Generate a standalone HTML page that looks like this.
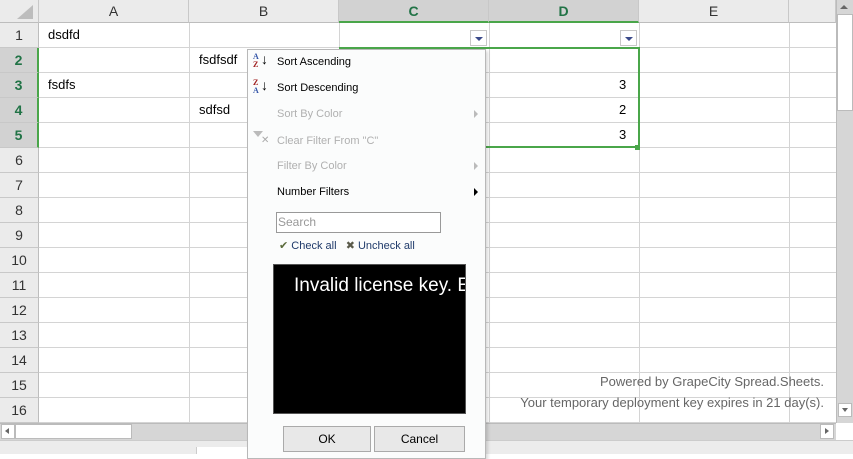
<!DOCTYPE html>
<html><head><meta charset="utf-8"><style>
*{box-sizing:border-box;margin:0;padding:0}
body{width:853px;height:454px;overflow:hidden;background:#fff;font-family:"Liberation Sans",sans-serif;position:relative}
.a{position:absolute}
.ch{top:0;height:23px;background:#ebebeb;border-right:1px solid #c8c8c8;border-bottom:1px solid #bdbdbd;text-align:center;line-height:23px;font-size:14px;color:#333}
.rh{left:0;width:39px;height:25px;background:#ebebeb;border-bottom:1px solid #c8c8c8;border-right:1px solid #bdbdbd;text-align:center;line-height:25px;font-size:14px;color:#333}
.sel{background:#d2d2d2;color:#217346;font-weight:bold}
.hl{height:1px;background:#d4d4d4;left:39px;width:797px}
.vl{width:1px;background:#d4d4d4;top:23px;height:400px}
.t{font-size:13px;color:#000}
.mi{left:277px;font-size:11px;color:#000}
.dis{color:#b0b0b0}
.fb{width:17px;height:16px;border:1px solid #c8c8c8;background:#fff}
.fb:after{content:"";position:absolute;left:4px;top:6px;border-left:4px solid transparent;border-right:4px solid transparent;border-top:4px solid #3b4a8a}
.arr{width:0;height:0;border-top:4px solid transparent;border-bottom:4px solid transparent;border-left:4px solid #bbb}
</style></head><body>
<div class="a ch" style="left:0;width:39px;background:#ebebeb"></div>
<div class="a" style="left:17px;top:5px;width:0;height:0;border-left:16px solid transparent;border-bottom:14px solid #bdbdbd"></div>
<div class="a ch" style="left:39px;width:150px">A</div>
<div class="a ch" style="left:189px;width:150px">B</div>
<div class="a ch sel" style="left:339px;width:150px;border-bottom:2px solid #4aa64a">C</div>
<div class="a ch sel" style="left:489px;width:150px;border-bottom:2px solid #4aa64a">D</div>
<div class="a ch" style="left:639px;width:150px">E</div>
<div class="a ch" style="left:789px;width:47px"></div>
<div class="a rh" style="top:23px">1</div>
<div class="a rh sel" style="top:48px;border-right:2px solid #4aa64a">2</div>
<div class="a rh sel" style="top:73px;border-right:2px solid #4aa64a">3</div>
<div class="a rh sel" style="top:98px;border-right:2px solid #4aa64a">4</div>
<div class="a rh sel" style="top:123px;border-right:2px solid #4aa64a">5</div>
<div class="a rh" style="top:148px">6</div>
<div class="a rh" style="top:173px">7</div>
<div class="a rh" style="top:198px">8</div>
<div class="a rh" style="top:223px">9</div>
<div class="a rh" style="top:248px">10</div>
<div class="a rh" style="top:273px">11</div>
<div class="a rh" style="top:298px">12</div>
<div class="a rh" style="top:323px">13</div>
<div class="a rh" style="top:348px">14</div>
<div class="a rh" style="top:373px">15</div>
<div class="a rh" style="top:398px">16</div>
<div class="a hl" style="top:47px"></div><div class="a hl" style="top:72px"></div><div class="a hl" style="top:97px"></div><div class="a hl" style="top:122px"></div><div class="a hl" style="top:147px"></div><div class="a hl" style="top:172px"></div><div class="a hl" style="top:197px"></div><div class="a hl" style="top:222px"></div><div class="a hl" style="top:247px"></div><div class="a hl" style="top:272px"></div><div class="a hl" style="top:297px"></div><div class="a hl" style="top:322px"></div><div class="a hl" style="top:347px"></div><div class="a hl" style="top:372px"></div><div class="a hl" style="top:397px"></div><div class="a hl" style="top:422px"></div>
<div class="a vl" style="left:189px"></div><div class="a vl" style="left:339px"></div><div class="a vl" style="left:489px"></div><div class="a vl" style="left:639px"></div><div class="a vl" style="left:789px"></div>
<div class="a" style="left:339px;top:47px;width:301px;height:101px;border:2px solid #4aa64a"></div>
<div class="a" style="left:635px;top:145px;width:5px;height:5px;background:#4aa64a"></div>
<div class="a t" style="left:48px;top:27px">dsdfd</div>
<div class="a t" style="left:199px;top:52px">fsdfsdf</div>
<div class="a t" style="left:48px;top:77px">fsdfs</div>
<div class="a t" style="left:199px;top:102px">sdfsd</div>
<div class="a t" style="left:619px;top:77px">3</div>
<div class="a t" style="left:619px;top:102px">2</div>
<div class="a t" style="left:619px;top:127px">3</div>
<div class="a fb" style="left:470px;top:30px"></div>
<div class="a fb" style="left:620px;top:30px"></div>
<div class="a" style="right:29px;top:374px;font-size:13px;color:#666">Powered by GrapeCity Spread.Sheets.</div>
<div class="a" style="right:29px;top:395px;font-size:13px;color:#666">Your temporary deployment key expires in 21 day(s).</div>
<div class="a" style="left:836px;top:0;width:17px;height:423px;background:#d6d6d6;border-left:1px solid #bbb"></div>
<div class="a" style="left:837px;top:14px;width:16px;height:97px;background:#fff;border:1px solid #bbb"></div>
<div class="a" style="left:840px;top:5px;border-left:4px solid transparent;border-right:4px solid transparent;border-bottom:4px solid #666"></div>
<div class="a" style="left:838px;top:403px;width:14px;height:14px;background:#fff;border:1px solid #bbb"></div>
<div class="a" style="left:842px;top:408px;border-left:3px solid transparent;border-right:3px solid transparent;border-top:4px solid #666"></div>
<div class="a" style="left:0;top:423px;width:836px;height:17px;background:#d6d6d6;border-top:1px solid #bbb"></div>
<div class="a" style="left:1px;top:424px;width:14px;height:15px;background:#fff;border:1px solid #bbb"></div>
<div class="a" style="left:5px;top:428px;border-top:3px solid transparent;border-bottom:3px solid transparent;border-right:4px solid #666"></div>
<div class="a" style="left:15px;top:424px;width:117px;height:15px;background:#fff;border:1px solid #bbb"></div>
<div class="a" style="left:820px;top:424px;width:14px;height:15px;background:#fff;border:1px solid #bbb"></div>
<div class="a" style="left:825px;top:428px;border-top:3px solid transparent;border-bottom:3px solid transparent;border-left:4px solid #666"></div>
<div class="a" style="left:0;top:440px;width:853px;height:14px;background:#ececec;border-top:1px solid #ccc"></div>
<div class="a" style="left:196px;top:447px;width:60px;height:7px;background:#fff;border-left:1px solid #ccc"></div>
<div class="a" style="left:247px;top:49px;width:239px;height:410px;background:#fbfcfc;border:1px solid #b8b8b8;box-shadow:2px 2px 3px rgba(0,0,0,.15)"></div>
<div class="a" style="left:253px;top:53px;font-family:'Liberation Serif',serif;font-size:8px;line-height:8px;font-weight:bold"><span style="color:#3556a8">A</span><br><span style="color:#a02020">Z</span></div>
<div class="a" style="left:261px;top:51px;font-size:14px">↓</div>
<div class="a" style="left:253px;top:79px;font-family:'Liberation Serif',serif;font-size:8px;line-height:8px;font-weight:bold"><span style="color:#a02020">Z</span><br><span style="color:#3556a8">A</span></div>
<div class="a" style="left:261px;top:77px;font-size:14px">↓</div>
<div class="a" style="left:253px;top:131px;width:9px;height:0;border-left:5px solid transparent;border-right:5px solid transparent;border-top:6px solid #bbb"></div>
<div class="a" style="left:261px;top:135px;font-size:10px;color:#aaa">✕</div>
<div class="a mi" style="top:56px">Sort Ascending</div>
<div class="a mi" style="top:82px">Sort Descending</div>
<div class="a mi dis" style="top:108px">Sort By Color</div>
<div class="a mi dis" style="top:135px">Clear Filter From "C"</div>
<div class="a mi dis" style="top:160px">Filter By Color</div>
<div class="a mi" style="top:186px">Number Filters</div>
<div class="a arr" style="left:474px;top:110px"></div>
<div class="a arr" style="left:474px;top:162px"></div>
<div class="a arr" style="left:474px;top:188px;border-left-color:#000"></div>
<div class="a" style="left:276px;top:212px;width:165px;height:21px;border:1px solid #999;background:#fff;font-size:12px;color:#999;padding:2px 0 0 1px">Search</div>
<div class="a" style="left:279px;top:239px;font-size:11px;color:#1f3a6a"><span style="color:#5a6a3a">✔</span> Check all &nbsp;&nbsp;<span style="color:#5a5a4a">✖</span> Uncheck all</div>
<div class="a" style="left:273px;top:264px;width:193px;height:150px;background:#000;border:1px solid #555;overflow:hidden;color:#fff;font-size:19px;white-space:nowrap;padding:10px 0 0 20px">Invalid license key. E</div>
<div class="a" style="left:283px;top:426px;width:88px;height:26px;background:#e8e8e8;border:1px solid #aaa;text-align:center;line-height:24px;font-size:12px">OK</div>
<div class="a" style="left:374px;top:426px;width:91px;height:26px;background:#e8e8e8;border:1px solid #aaa;text-align:center;line-height:24px;font-size:12px">Cancel</div>
</body></html>
